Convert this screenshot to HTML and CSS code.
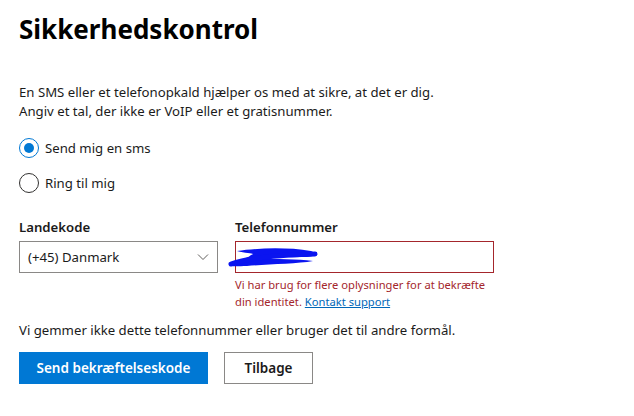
FILE: index.html
```html
<!DOCTYPE html>
<html lang="da">
<head>
<meta charset="utf-8">
<link rel="stylesheet" href="styles.css">
</head>
<body>
<main class="page">
  <h1 class="title">Sikkerhedskontrol</h1>
  <p class="intro">En SMS eller et telefonopkald hjælper os med at sikre, at det er dig.<br>Angiv et tal, der ikke er VoIP eller et gratisnummer.</p>
  <div class="radios">
    <label class="radio"><span class="dot checked"></span>Send mig en sms</label>
    <label class="radio"><span class="dot"></span>Ring til mig</label>
  </div>
  <div class="fields">
    <div class="field country">
      <div class="label">Landekode</div>
      <div class="select">
        <span>(+45) Danmark</span>
        <svg class="chev" width="12" height="8" viewBox="0 0 12 8"><path d="M1 1.5 L6 6.5 L11 1.5" fill="none" stroke="#605e5c" stroke-width="1"/></svg>
      </div>
    </div>
    <div class="field phone">
      <div class="label">Telefonnummer</div>
      <div class="input">
        <svg class="scribble" width="96" height="26" viewBox="0 0 96 26"><path d="M10 6 C30 3 60 2 84 6 C90 8 90 11 80 12 C60 12 40 13 30 14 C50 14 70 14 86 16 C70 19 40 19 20 21 C12 21 2 22 2 20 C8 16 20 14 24 10 C30 8 20 9 10 6 Z" fill="#0a14f0"/><path d="M4 19 C20 13 50 10 88 9" stroke="#0a14f0" stroke-width="5" fill="none" stroke-linecap="round"/></svg>
      </div>
      <p class="error">Vi har brug for flere oplysninger for at bekræfte<br>din identitet. <a href="#">Kontakt support</a></p>
    </div>
  </div>
  <p class="note">Vi gemmer ikke dette telefonnummer eller bruger det til andre formål.</p>
  <div class="buttons">
    <button class="btn primary">Send bekræftelseskode</button>
    <button class="btn secondary">Tilbage</button>
  </div>
</main>
</body>
</html>
```
FILE: styles.css
```css
* { box-sizing: border-box; }
html, body { margin: 0; padding: 0; background: #fff; }
body {
  font-family: "Segoe UI", "Noto Sans", "Open Sans", sans-serif;
  color: #1b1b1b;
  font-size: 13.2px;
}
.page { padding: 11px 19px 0 19px; }
.title {
  margin: 0;
  font-size: 26px;
  font-weight: 700;
  line-height: 36px;
  color: #000;
}
.intro {
  margin: 36px 0 0 0;
  line-height: 19px;
}
.radios { display: flex; flex-direction: column; gap: 15px; margin-top: 17px; }
.radio { display: flex; align-items: center; gap: 6px; line-height: 20px; }
.dot {
  width: 20px; height: 20px; border-radius: 50%;
  border: 1px solid #323130; position: relative; flex: none;
}
.dot.checked { border-color: #0078d4; }
.dot.checked::after {
  content: ""; position: absolute; left: 4px; top: 4px;
  width: 10px; height: 10px; border-radius: 50%; background: #0078d4;
}
.fields { display: flex; gap: 17px; margin-top: 24px; }
.label { font-weight: 600; line-height: 20px; margin-bottom: 4px; }
.country { width: 199px; }
.phone { width: 259px; }
.select {
  height: 32px; border: 1px solid #8a8886; display: flex; align-items: center;
  justify-content: space-between; padding: 0 8px 0 8px;
}
.input { height: 32px; border: 1px solid #a4262c; position: relative; }
.scribble { position: absolute; left: -9px; top: 3px; }
.error {
  margin: 4px 0 0 0; font-size: 11.2px; line-height: 16.5px; color: #a4262c;
}
.error a { color: #0067b8; text-decoration: underline; }
.note { margin: 10px 0 0 0; line-height: 20px; }
.buttons { display: flex; gap: 16px; margin-top: 12px; }
.btn {
  font-family: inherit; font-size: 13.5px; font-weight: 600; height: 32px;
  padding: 0; border-radius: 0; cursor: pointer; white-space: nowrap;
}
.primary { width: 189px; background: #0078d4; color: #fff; border: 1px solid #0078d4; }
.secondary { width: 89px; background: #fff; color: #1b1b1b; border: 1px solid #8a8886; }
```
